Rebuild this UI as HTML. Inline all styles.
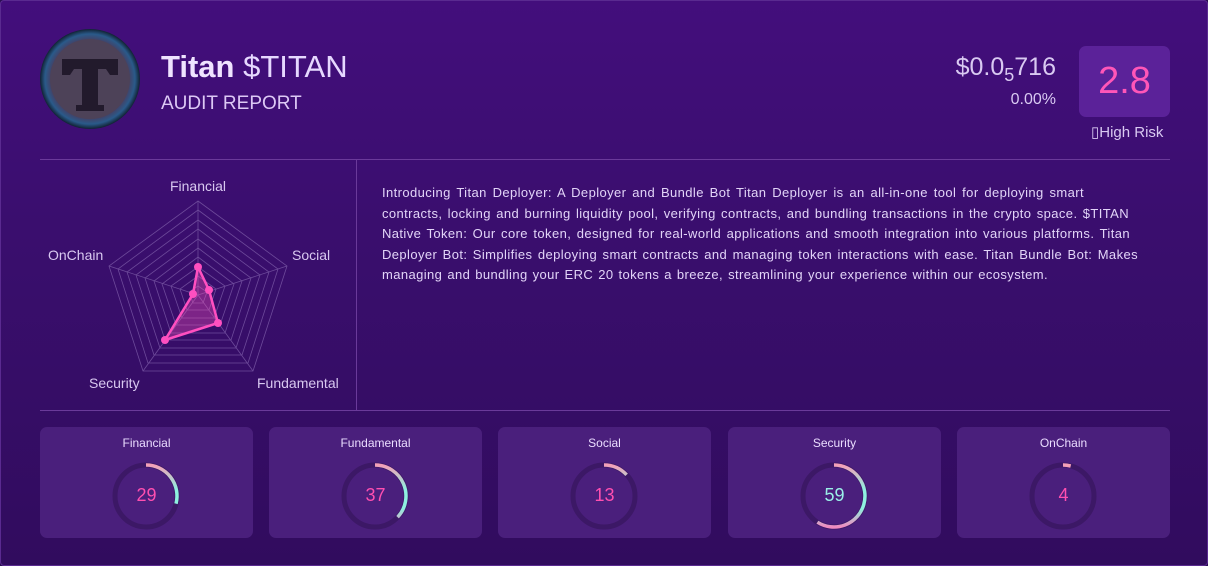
<!DOCTYPE html>
<html><head><meta charset="utf-8"><style>
*{margin:0;padding:0;box-sizing:border-box}
body{width:1208px;height:566px;overflow:hidden;font-family:"Liberation Sans",sans-serif;background:#2a0d52}
.wrap{position:absolute;left:0;top:0;width:1208px;height:566px;border:1px solid #5a2a90;border-radius:4px;background:linear-gradient(180deg,#430e7c 0%,#3a0e6e 40%,#310c5e 100%)}
.t{position:absolute;color:#efe3ff;white-space:nowrap}
.hr{position:absolute;left:39px;width:1130px;height:1px;background:#6a3a9a}
.card{position:absolute;top:426px;width:213px;height:111px;background:#4a1f7c;border-radius:7px}
.card .l{position:absolute;top:9px;width:100%;text-align:center;color:#eadcff;font-size:12px}
.card svg{position:absolute;left:71px;top:34px}
.card .n{position:absolute;top:58px;width:100%;text-align:center;color:#ff4fb0;font-size:18px}
.desc{position:absolute;left:381px;top:182px;font-size:13px;letter-spacing:0.4px;line-height:20.5px;color:#e2d4f8}
.desc div{white-space:nowrap;overflow:visible;text-align:justify;text-align-last:justify}
</style></head><body><div class="wrap">
<svg style="position:absolute;left:39px;top:28px" width="100" height="100">
<defs><radialGradient id="lg" cx="50%" cy="50%" r="50%"><stop offset="0.75" stop-color="#4a3a5c"/><stop offset="0.9" stop-color="#2a5a8a"/><stop offset="1" stop-color="#123"/></radialGradient></defs>
<circle cx="50" cy="50" r="50" fill="url(#lg)"/><circle cx="50" cy="50" r="40" fill="#4d4258"/>
<path d="M22 30h56v16h-8l-4-6h-8v36h6v6H36v-6h6V40h-8l-4 6h-8z" fill="#221a2c"/></svg>
<div class="t" style="left:160px;top:48px;font-size:31px"><b style="font-weight:600">Titan</b> <span style="font-weight:300;color:#e6d8ff">$TITAN</span></div>
<div class="t" style="left:160px;top:92px;font-size:19px;color:#dcc8f5">AUDIT REPORT</div>
<div class="t" style="right:151px;top:52px;font-size:25px;color:#d9c9f2">$0.0<span style="font-size:18px;position:relative;top:6px">5</span>716</div>
<div class="t" style="right:151px;top:90px;font-size:16px;color:#d9c9f2">0.00%</div>
<div style="position:absolute;left:1078px;top:45px;width:91px;height:71px;background:#5b2299;border-radius:7px;color:#ff56b8;font-size:38px;text-align:center;line-height:71px">2.8</div>
<div class="t" style="left:1090px;top:122px;font-size:15px;color:#d9c9f2">▯High Risk</div>
<div class="hr" style="top:158px"></div>
<div class="hr" style="top:409px"></div>
<div style="position:absolute;left:355px;top:159px;width:1px;height:250px;background:#6a3a9a"></div>
<svg style="position:absolute;left:0;top:160px" width="355" height="250" font-family="Liberation Sans" font-size="14" fill="#d8c8f0">
<g transform="translate(0,-160)" fill="none" stroke="#6d4a9a" stroke-width="0.8">
<polygon points="197,200 286,265 252,370 142,370 108,265"/>
<polygon points="197,209 277,268 247,362 147,362 117,268"/>
<polygon points="197,219 268,271 241,354 153,354 126,271"/>
<polygon points="197,228 259,274 235,347 159,347 135,274"/>
<polygon points="197,238 250,277 230,339 164,339 144,277"/>
<polygon points="197,247 241,280 224,332 170,332 153,280"/>
<polygon points="197,256 233,283 219,324 175,324 161,283"/>
<polygon points="197,266 224,285 213,317 181,317 170,285"/>
<polygon points="197,275 215,288 208,309 186,309 179,288"/>
<polygon points="197,285 206,291 202,302 192,302 188,291"/>
<line x1="197" y1="294" x2="197" y2="200"/><line x1="197" y1="294" x2="286" y2="265"/><line x1="197" y1="294" x2="252" y2="370"/><line x1="197" y1="294" x2="142" y2="370"/><line x1="197" y1="294" x2="108" y2="265"/>
<polygon points="197,266 208,289 217,322 164,339 192,293" fill="rgba(255,80,190,0.35)" stroke="#ff4fc0" stroke-width="2.5"/>
<g fill="#ff4fc0" stroke="none"><circle cx="197" cy="266" r="4"/><circle cx="208" cy="289" r="4"/><circle cx="217" cy="322" r="4"/><circle cx="164" cy="339" r="4"/><circle cx="192" cy="293" r="4"/></g>
</g>
<text x="197" y="30" text-anchor="middle">Financial</text>
<text x="291" y="99">Social</text>
<text x="256" y="227">Fundamental</text>
<text x="88" y="227">Security</text>
<text x="47" y="99">OnChain</text>
</svg>
<div class="desc">
<div style="width:702px">Introducing Titan Deployer: A Deployer and Bundle Bot Titan Deployer is an all-in-one tool for deploying smart</div>
<div style="width:747px">contracts, locking and burning liquidity pool, verifying contracts, and bundling transactions in the crypto space. $TITAN</div>
<div style="width:748px">Native Token: Our core token, designed for real-world applications and smooth integration into various platforms. Titan</div>
<div style="width:756px">Deployer Bot: Simplifies deploying smart contracts and managing token interactions with ease. Titan Bundle Bot: Makes</div>
<div style="width:666px">managing and bundling your ERC 20 tokens a breeze, streamlining your experience within our ecosystem.</div>
</div>
<svg width="0" height="0" style="position:absolute"><defs><linearGradient id="g" gradientUnits="userSpaceOnUse" x1="35" y1="4" x2="35" y2="66"><stop offset="0" stop-color="#f4a0b8"/><stop offset="0.4" stop-color="#8ef0e0"/><stop offset="0.7" stop-color="#8ef0e0"/><stop offset="1" stop-color="#f08ac0"/></linearGradient></defs></svg>
<div class="card" style="left:39px"><div class="l">Financial</div><svg width="70" height="70"><circle cx="35" cy="35" r="31" fill="none" stroke="#3c1866" stroke-width="5"/><path d="M35 4A31 31 0 0 1 65.03 42.71" fill="none" stroke="url(#g)" stroke-width="3.5"/></svg><div class="n">29</div></div>
<div class="card" style="left:268px"><div class="l">Fundamental</div><svg width="70" height="70"><circle cx="35" cy="35" r="31" fill="none" stroke="#3c1866" stroke-width="5"/><path d="M35 4A31 31 0 0 1 57.6 56.2" fill="none" stroke="url(#g)" stroke-width="3.5"/></svg><div class="n">37</div></div>
<div class="card" style="left:497px"><div class="l">Social</div><svg width="70" height="70"><circle cx="35" cy="35" r="31" fill="none" stroke="#3c1866" stroke-width="5"/><path d="M35 4A31 31 0 0 1 57.6 13.8" fill="none" stroke="url(#g)" stroke-width="3.5"/></svg><div class="n">13</div></div>
<div class="card" style="left:727px"><div class="l">Security</div><svg width="70" height="70"><circle cx="35" cy="35" r="31" fill="none" stroke="#3c1866" stroke-width="5"/><path d="M35 4A31 31 0 1 1 18.4 61.2" fill="none" stroke="url(#g)" stroke-width="3.5"/></svg><div class="n" style="color:#9af0e8">59</div></div>
<div class="card" style="left:956px"><div class="l">OnChain</div><svg width="70" height="70"><circle cx="35" cy="35" r="31" fill="none" stroke="#3c1866" stroke-width="5"/><path d="M35 4A31 31 0 0 1 42.7 5" fill="none" stroke="#f4a0b8" stroke-width="3.5"/></svg><div class="n">4</div></div>
</div></body></html>
